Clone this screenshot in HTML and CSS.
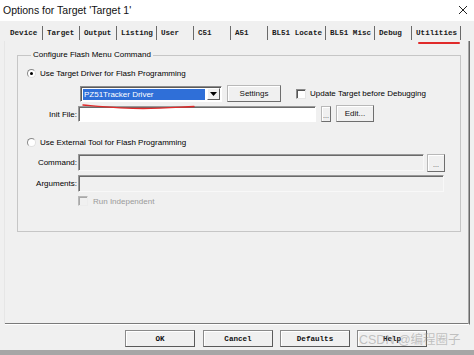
FILE: index.html
```html
<!DOCTYPE html>
<html>
<head>
<meta charset="utf-8">
<link rel="stylesheet" href="styles.css">
</head>
<body>
<div class="window">
  <div class="titlebar">
    <span class="title">Options for Target 'Target 1'</span>
    <svg class="close" width="10" height="10" viewBox="0 0 10 10"><path d="M1 1 L9 9 M9 1 L1 9" stroke="#222" stroke-width="1" fill="none"/></svg>
  </div>
  <div class="tabs">
    <span class="tab">Device</span>
    <span class="tab">Target</span>
    <span class="tab">Output</span>
    <span class="tab">Listing</span>
    <span class="tab">User</span>
    <span class="tab">C51</span>
    <span class="tab">A51</span>
    <span class="tab">BL51 Locate</span>
    <span class="tab">BL51 Misc</span>
    <span class="tab">Debug</span>
    <span class="tab active">Utilities<span class="mark-line"></span></span>
  </div>
  <div class="page">
    <fieldset class="group">
      <legend>Configure Flash Menu Command</legend>
      <div class="radio-row first"><span class="radio checked"></span><span>Use Target Driver for Flash Programming</span></div>
      <div class="driver-row">
        <div class="select">
          <span class="select-value">PZ51Tracker Driver</span>
          <span class="select-arrow"><svg width="7" height="4" viewBox="0 0 7 4"><path d="M0 0 H7 L3.5 4 Z" fill="#000"/></svg></span>
        </div>
        <span class="btn settings">Settings</span>
        <span class="check-label"><span class="check"></span>Update Target before Debugging</span>
        <svg class="scribble" width="116" height="10" viewBox="0 0 116 10"><path d="M2 3 C 20 4.5, 40 6.5, 62 6.5 S 100 5, 113 4.5" stroke="#e02a2a" stroke-width="1.4" fill="none" stroke-linecap="round"/></svg>
      </div>
      <div class="field-row init-row">
        <span class="lbl">Init File:</span>
        <span class="input init-input"></span>
        <span class="btn dots small">...</span>
        <span class="btn edit">Edit...</span>
      </div>
      <div class="radio-row second"><span class="radio"></span><span>Use External Tool for Flash Programming</span></div>
      <div class="field-row cmd-row">
        <span class="lbl">Command:</span>
        <span class="input disabled cmd-input"></span>
        <span class="btn dots wide">...</span>
      </div>
      <div class="field-row args-row">
        <span class="lbl">Arguments:</span>
        <span class="input disabled args-input"></span>
      </div>
      <div class="run-row"><span class="check disabled"></span><span class="dim">Run Independent</span></div>
    </fieldset>
  </div>
  <div class="buttons">
    <span class="btn dlg">OK</span>
    <span class="btn dlg cancel">Cancel</span>
    <span class="btn dlg">Defaults</span>
    <span class="btn dlg">Help</span>
  </div>
  <div class="edge"></div>
  <div class="watermark">CSDN @编程圈子</div>
</div>
</body>
</html>
```
FILE: styles.css
```css
* { box-sizing: border-box; }
body {
  margin: 0;
  width: 474px;
  height: 355px;
  overflow: hidden;
  background: #f0f0f0;
  font-family: "Liberation Sans", Arial, sans-serif;
  font-size: 8px;
  color: #000;
}
.window {
  position: relative;
  width: 474px;
  height: 355px;
  display: flex;
  flex-direction: column;
}
.titlebar {
  height: 21px;
  flex: none;
  background: #fff;
  display: flex;
  align-items: center;
  justify-content: space-between;
  padding: 0 6px 1px 3px;
}
.title { font-size: 10.5px; color: #111; }

.tabs {
  height: 20px;
  flex: none;
  display: flex;
  align-items: flex-end;
  padding-left: 6px;
}
.tab {
  position: relative;
  box-sizing: content-box;
  height: 14px;
  line-height: 14px;
  min-width: 29px;
  padding: 0 3px 0 4px;
  margin-bottom: 1px;
  border-right: 1px solid #6a6a6a;
  font-family: "Liberation Mono", "Courier New", monospace;
  font-weight: bold;
  font-size: 7.6px;
  color: #1a1a1a;
  white-space: pre;
}
.mark-line {
  position: absolute;
  left: 6px;
  right: 0;
  top: 16px;
  height: 2px;
  background: #e02a2a;
  border-radius: 1px;
}

.page {
  flex: none;
  height: 284px;
  margin: 0 4px;
  border-left: 1px solid #e6e6e6;
  border-right: 1px solid #6a6a6a;
  border-bottom: 1px solid #fff;
  box-shadow: inset -1px 0 #a8a8a8, inset 0 -1px #7a7a7a;
  padding-top: 9px;
}
.group {
  margin: 0 8px 0 12px;
  height: 182px;
  border: 1px solid #c6c6c6;
  padding: 0 0 0 9px;
  min-width: 0;
}
.group legend {
  padding: 0 2px;
  margin-left: 4px;
  line-height: 10px;
  font-size: 8px;
}
.radio-row {
  display: flex;
  align-items: center;
  gap: 4px;
  height: 10px;
}
.radio-row.first { margin-top: 8px; }
.radio-row.second { margin-top: 15px; }
.radio {
  width: 9px;
  height: 9px;
  border-radius: 50%;
  border: 1px solid #8a8a8a;
  border-right-color: #e0e0e0;
  border-bottom-color: #e0e0e0;
  background: #fff;
  display: flex;
  align-items: center;
  justify-content: center;
}
.radio.checked::after {
  content: "";
  width: 3px;
  height: 3px;
  border-radius: 50%;
  background: #000;
}

.driver-row {
  position: relative;
  display: flex;
  align-items: flex-start;
  height: 17px;
  margin-top: 7px;
  padding-left: 53px;
}
.select {
  margin-top: 1px;
  width: 142px;
  height: 16px;
  display: flex;
  background: #fff;
  border-top: 1px solid #8c8c8c;
  border-left: 1px solid #8c8c8c;
  border-right: 1px solid #fff;
  border-bottom: 1px solid #fff;
  box-shadow: inset 1px 1px #5a5a5a;
  padding: 2px 1px 1px 2px;
}
.select-value {
  flex: 1;
  background: #2f6fd8;
  color: #fff;
  line-height: 11px;
  padding-left: 1px;
  margin-right: 2px;
}
.select-arrow {
  width: 13px;
  height: 12px;
  margin-top: -1px;
  background: #f0f0f0;
  border: 1px solid #fff;
  border-right-color: #5a5a5a;
  border-bottom-color: #5a5a5a;
  display: flex;
  align-items: center;
  justify-content: center;
}
.btn {
  display: inline-flex;
  align-items: center;
  justify-content: center;
  height: 17px;
  background: #f0f0f0;
  border: 1px solid #b8b8b8;
  border-right-color: #6e6e6e;
  border-bottom-color: #6e6e6e;
  box-shadow: inset 1px 1px #fff;
  font-size: 8px;
  color: #111;
}
.settings { width: 54px; margin-left: 5px; }
.check-label {
  display: flex;
  align-items: center;
  gap: 4px;
  margin-left: 15px;
  height: 17px;
}
.check {
  width: 10px;
  height: 10px;
  background: #fff;
  border-top: 1px solid #8a8a8a;
  border-left: 1px solid #8a8a8a;
  border-right: 1px solid #e6e6e6;
  border-bottom: 1px solid #e6e6e6;
  box-shadow: inset 1px 1px #555;
  flex: none;
}
.check.disabled {
  background: #f0f0f0;
  box-shadow: inset 1px 1px #a8a8a8;
  border-color: #b8b8b8 #ececec #ececec #b8b8b8;
}
.scribble {
  position: absolute;
  left: 54px;
  top: 17px;
}

.field-row {
  display: flex;
  align-items: flex-start;
}
.lbl {
  width: 51px;
  padding-right: 1px;
  text-align: right;
  flex: none;
  white-space: nowrap;
}
.input {
  background: #fff;
  border-top: 1px solid #999;
  border-left: 1px solid #999;
  border-right: 1px solid #fff;
  border-bottom: 1px solid #fff;
  box-shadow: inset 1px 1px #6a6a6a;
  flex: none;
}
.input.disabled {
  background: #f0f0f0;
  border-right-color: #f8f8f8;
  border-bottom-color: #f8f8f8;
}
.init-row { margin-top: 3px; height: 17px; }
.init-row .lbl { line-height: 17px; padding-top: 1px; }
.init-input { width: 238px; height: 16px; margin-top: 1px; }
.dots { font-size: 7px; color: #444; padding-top: 2px; }
.dots.small { width: 10px; height: 16px; margin-top: 1px; margin-left: 5px; }
.edit { width: 38px; margin-left: 5px; }

.cmd-row { margin-top: 7px; height: 18px; }
.cmd-row .lbl, .args-row .lbl { line-height: 17px; }
.cmd-input { width: 346px; height: 17px; }
.dots.wide { width: 18px; height: 18px; margin-left: 3px; }
.args-row { margin-top: 3px; height: 17px; }
.args-input { width: 366px; height: 17px; }

.run-row {
  display: flex;
  align-items: center;
  gap: 5px;
  margin-top: 4px;
  height: 10px;
  padding-left: 51px;
}
.dim { color: #9a9a9a; }

.buttons {
  flex: none;
  height: 25px;
  display: flex;
  justify-content: flex-end;
  align-items: flex-start;
  gap: 7px;
  padding: 5px 47px 0 0;
}
.btn.dlg {
  width: 70px;
  font-family: "Liberation Mono", "Courier New", monospace;
  font-weight: bold;
  font-size: 7.6px;
  border-color: #8a8a8a #5a5a5a #5a5a5a #8a8a8a;
}
.btn.dlg.cancel { margin-left: 1px; }
.edge {
  flex: none;
  height: 5px;
  background: #a6a6a6;
}
.watermark {
  position: absolute;
  left: 359px;
  top: 332px;
  font-family: "Liberation Sans", "Noto Sans CJK SC", sans-serif;
  font-size: 12.5px;
  line-height: 16px;
  color: rgba(150, 150, 150, 0.55);
  white-space: nowrap;
}
```
